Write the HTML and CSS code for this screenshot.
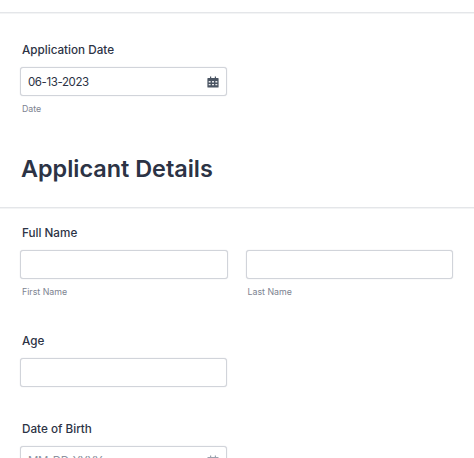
FILE: index.html
```html
<!DOCTYPE html>
<html>
<head>
<meta charset="utf-8">
<title>Application Form</title>
<link rel="stylesheet" href="styles.css">
</head>
<body>
<div class="form">
	<hr class="rule rule_top">
	<div class="field field_date">
		<div class="label">Application Date</div>
		<div class="input input_narrow">
			<span class="value">06-13-2023</span>
			<svg class="cal" viewBox="0 0 12 12"><path d="M1 2h10a.6.6 0 0 1 .6.6V11a.6.6 0 0 1-.6.6H1a.6.6 0 0 1-.6-.6V2.600A.6.6 0 0 1 1 2zM3 .6h1.200V2H3zM7.800.6H9V2H7.800z" fill="#4b5563"/><path d="M1.700 5h1.900v1.400H1.700zM5 5h2v1.400H5zM8.400 5h1.900v1.400H8.400zM1.700 7.900h1.900v1.400H1.700zM5 7.900h2v1.400H5zM8.400 7.900h1.900v1.400H8.400z" fill="#e8e9ec"/></svg>
		</div>
		<div class="sub">Date</div>
	</div>
	<h1 class="title">Applicant Details</h1>
	<hr class="rule">
	<div class="field field_name">
		<div class="label">Full Name</div>
		<div class="pair">
			<div class="col">
				<div class="input"></div>
				<div class="sub">First Name</div>
			</div>
			<div class="col">
				<div class="input"></div>
				<div class="sub">Last Name</div>
			</div>
		</div>
	</div>
	<div class="field field_age">
		<div class="label">Age</div>
		<div class="input input_narrow"></div>
	</div>
	<div class="field field_birth">
		<div class="label">Date of Birth</div>
		<div class="input input_narrow">
			<span class="value value_hint">MM-DD-YYYY</span>
			<svg class="cal" viewBox="0 0 12 12"><path d="M1 2h10a.6.6 0 0 1 .6.6V11a.6.6 0 0 1-.6.6H1a.6.6 0 0 1-.6-.6V2.600A.6.6 0 0 1 1 2zM3 .6h1.200V2H3zM7.800.6H9V2H7.800z" fill="#9ca3af"/></svg>
		</div>
	</div>
</div>
</body>
</html>
```

FILE: styles.css
```css
html, body { margin:0; padding:0; height:100%; overflow:hidden; background-color:#fff; }
body { font-family:Inter, "Liberation Sans", sans-serif; color:#2c3345; }
.form { height:458px; overflow:hidden; }
.rule { margin:0; height:1px; border:0; background-color:#e4e6e9; box-shadow:0 1px 0 #f3f4f5; }
.rule_top { margin-top:12px; }
.field { padding:0 20px; }
.field_date { margin-top:28px; }
.field_name { margin-top:16px; }
.field_age { margin-top:34px; }
.field_birth { margin-top:33px; }
.label { margin-left:2px; height:16px; line-height:18px; font-size:11.700px; font-weight:500; }
.input {
	display:flex;
	align-items:center;
	justify-content:space-between;
	box-sizing:border-box;
	height:29px;
	margin-top:10px;
	padding:0 7px 0 8px;
	border:1px solid #d1d4da;
	border-radius:3px;
	background-color:#fff;
	box-shadow:0 0 1px #c9ccd3;
}
.input_narrow { width:207px; }
.value { margin-left:-1px; font-size:11.500px; letter-spacing:-.4px; color:#2c3345; }
.value_hint { color:#8d93a0; }
.cal { width:12px; height:12px; }
.sub { margin:7px 0 0 2px; height:12px; line-height:12px; font-size:8.800px; color:#7d8391; }
.title { margin:39px 0 0 21px; height:30px; line-height:30px; font-size:23.400px; font-weight:600; color:#2c3345; }
.title + .rule { margin-top:23px; }
.pair { display:flex; gap:18px; width:433px; }
.col { flex:1; }
```
